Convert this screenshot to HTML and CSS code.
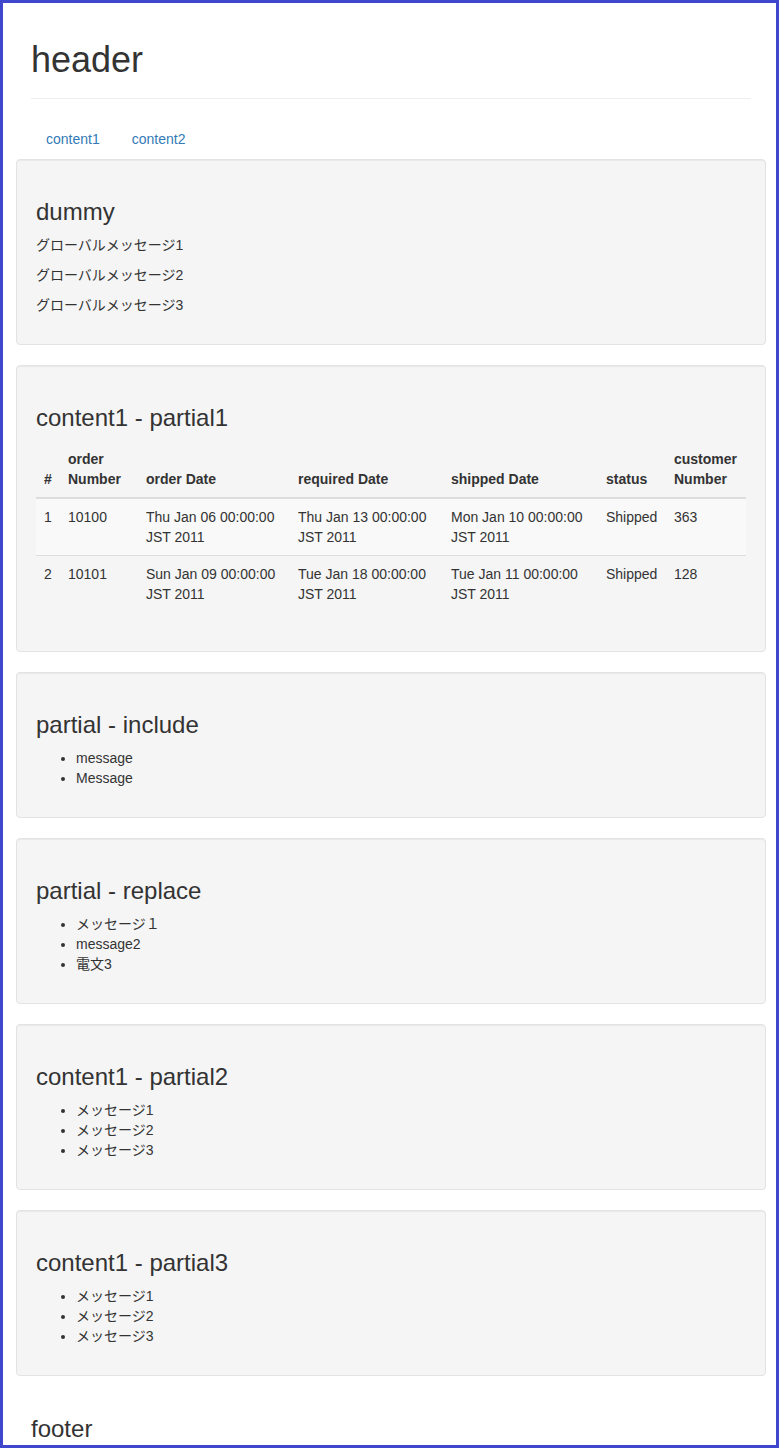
FILE: index.html
```html
<!DOCTYPE html>
<html lang="ja">
<head>
<meta charset="utf-8">
<title>layout sample</title>
<link rel="stylesheet" href="styles.css">
</head>
<body>
<div class="frame">
  <div class="page">
    <header class="page-header">
      <h1>header</h1>
    </header>
    <ul class="nav">
      <li><a href="#">content1</a></li>
      <li><a href="#">content2</a></li>
    </ul>

    <section class="well">
      <h3>dummy</h3>
      <p>グローバルメッセージ1</p>
      <p>グローバルメッセージ2</p>
      <p>グローバルメッセージ3</p>
    </section>

    <section class="well">
      <h3>content1 - partial1</h3>
      <table class="table">
        <colgroup>
          <col class="c-idx">
          <col class="c-num">
          <col class="c-date">
          <col class="c-date2">
          <col class="c-date3">
          <col class="c-status">
          <col class="c-cust">
        </colgroup>
        <thead>
          <tr>
            <th>#</th>
            <th>order Number</th>
            <th>order Date</th>
            <th>required Date</th>
            <th>shipped Date</th>
            <th>status</th>
            <th>customer Number</th>
          </tr>
        </thead>
        <tbody>
          <tr class="odd">
            <td>1</td>
            <td>10100</td>
            <td>Thu Jan 06 00:00:00 JST 2011</td>
            <td>Thu Jan 13 00:00:00 JST 2011</td>
            <td>Mon Jan 10 00:00:00 JST 2011</td>
            <td>Shipped</td>
            <td>363</td>
          </tr>
          <tr>
            <td>2</td>
            <td>10101</td>
            <td>Sun Jan 09 00:00:00 JST 2011</td>
            <td>Tue Jan 18 00:00:00 JST 2011</td>
            <td>Tue Jan 11 00:00:00 JST 2011</td>
            <td>Shipped</td>
            <td>128</td>
          </tr>
        </tbody>
      </table>
    </section>

    <section class="well">
      <h3>partial - include</h3>
      <ul class="list">
        <li>message</li>
        <li>Message</li>
      </ul>
    </section>

    <section class="well">
      <h3>partial - replace</h3>
      <ul class="list">
        <li>メッセージ１</li>
        <li>message2</li>
        <li>電文3</li>
      </ul>
    </section>

    <section class="well">
      <h3>content1 - partial2</h3>
      <ul class="list">
        <li>メッセージ1</li>
        <li>メッセージ2</li>
        <li>メッセージ3</li>
      </ul>
    </section>

    <section class="well">
      <h3>content1 - partial3</h3>
      <ul class="list">
        <li>メッセージ1</li>
        <li>メッセージ2</li>
        <li>メッセージ3</li>
      </ul>
    </section>

    <footer class="footer">
      <h3>footer</h3>
    </footer>
  </div>
</div>
</body>
</html>
```

FILE: styles.css
```css
html, body {
  margin: 0;
  padding: 0;
  background: #ffffff;
}

body {
  font-family: "Liberation Sans", Arial, "Noto Sans CJK JP", sans-serif;
  font-size: 14px;
  line-height: 20px;
  color: #333333;
}

.frame {
  box-sizing: border-box;
  width: 779px;
  height: 1448px;
  border: 3px solid #3f48cc;
  overflow: hidden;
}

.page {
  width: 750px;
  padding: 37px 0 0 13px;
}

.page-header {
  margin: 0 15px 20px 15px;
  padding-bottom: 9px;
  border-bottom: 1px solid #eeeeee;
}

.page-header h1 {
  margin: 0 0 10px 0;
  font-size: 36px;
  line-height: 39px;
  font-weight: 500;
  color: #333333;
}

.nav {
  display: flex;
  list-style: none;
  margin: 0 0 0 15px;
  padding: 0;
}

.nav li + li {
  margin-left: 2px;
}

.nav a {
  display: block;
  padding: 10px 15px;
  color: #337ab7;
  text-decoration: none;
}

.well {
  box-sizing: border-box;
  width: 750px;
  margin-bottom: 20px;
  padding: 19px;
  background-color: #f5f5f5;
  border: 1px solid #e3e3e3;
  border-radius: 4px;
  box-shadow: inset 0 1px 1px rgba(0, 0, 0, 0.05);
}

h3 {
  margin: 20px 0 10px 0;
  font-size: 24px;
  line-height: 26px;
  font-weight: 500;
  color: #333333;
}

.well p {
  margin: 0 0 10px 0;
}

.list {
  margin: 0 0 10px 0;
  padding-left: 40px;
}

.table {
  width: 100%;
  table-layout: fixed;
  border-collapse: collapse;
  border-spacing: 0;
  margin-bottom: 20px;
}

.c-idx { width: 24px; }
.c-num { width: 78px; }
.c-date { width: 152px; }
.c-date2 { width: 153px; }
.c-date3 { width: 155px; }
.c-status { width: 68px; }
.c-cust { width: 80px; }

.table th {
  padding: 8px;
  text-align: left;
  vertical-align: bottom;
  font-weight: bold;
  border-bottom: 2px solid #dddddd;
}

.table td {
  padding: 8px;
  vertical-align: top;
  border-top: 1px solid #dddddd;
}

.table tr.odd td {
  background-color: #f9f9f9;
}

.footer {
  display: flow-root;
  margin: 0 15px;
}
```
